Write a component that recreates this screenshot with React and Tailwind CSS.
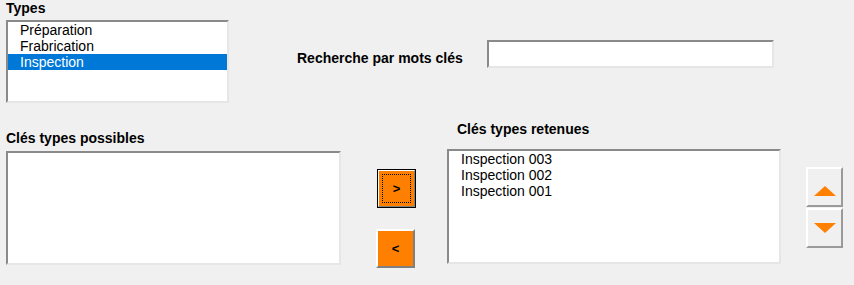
import { useState } from 'react';

const sunken = 'bg-white border-2 border-t-[#8a8a8a] border-l-[#8a8a8a] border-r-[#e6e6e6] border-b-[#e6e6e6]';

const ListBox = ({ items, selected, onSelect, className }) => (
  <div className={`${sunken} ${className}`}>
    {items.map((item) => (
      <div
        key={item}
        onClick={() => onSelect && onSelect(item)}
        className={`h-[16px] leading-[16px] pl-[12px] text-[14px] whitespace-nowrap ${
          selected === item ? 'bg-[#0078d7] text-white' : 'text-black'
        }`}
      >
        {item}
      </div>
    ))}
  </div>
);

const Triangle = ({ down }) => (
  <svg width="22" height="10" viewBox="0 0 22 10">
    <polygon points={down ? '0,0 22,0 11,10' : '11,0 22,10 0,10'} fill="#ff8000" />
  </svg>
);

export default function App() {
  const [type, setType] = useState('Inspection');
  const [search, setSearch] = useState('');

  return (
    <div className="w-[854px] h-[285px] bg-[#f0f0f0] overflow-hidden text-black font-['Liberation_Sans',Arial,sans-serif]">
      {/* Haut : types + recherche */}
      <div className="flex h-[121px]">
        <div className="ml-[6px] w-[223px]">
          <div className="h-[20px] leading-[16px] text-[14px] font-bold">Types</div>
          <ListBox
            items={['Préparation', 'Frabrication', 'Inspection']}
            selected={type}
            onSelect={setType}
            className="h-[83px]"
          />
        </div>
        <div className="ml-[68px] w-[190px] mt-[50px] leading-[16px] text-[14px] font-bold whitespace-nowrap">
          Recherche par mots clés
        </div>
        <input
          value={search}
          onChange={(e) => setSearch(e.target.value)}
          className={`${sunken} mt-[40px] w-[287px] h-[28px] outline-none px-1 text-[14px]`}
        />
      </div>

      {/* Bas : clés possibles / retenues */}
      <div className="flex items-start">
        <div className="ml-[6px] w-[335px]">
          <div className="mt-[9px] h-[21px] leading-[16px] text-[14px] font-bold">Clés types possibles</div>
          <ListBox items={[]} className="h-[114px]" />
        </div>

        <div className="ml-[35px] w-[40px] flex flex-col">
          <button className="mt-[48px] ml-[1px] w-[39px] h-[39px] border border-black p-0">
            <div className="w-full h-full bg-[#ff8000] border border-t-white border-l-white border-r-[#808080] border-b-[#808080] p-[3px]">
              <div className="w-full h-full border border-dotted border-black flex items-center justify-center text-[13px] font-bold">
                &gt;
              </div>
            </div>
          </button>
          <button className="mt-[21px] w-[39px] h-[39px] bg-[#ff8000] border-2 border-t-white border-l-white border-r-[#808080] border-b-[#808080] flex items-center justify-center text-[13px] font-bold">
            &lt;
          </button>
        </div>

        <div className="ml-[31px] w-[334px]">
          <div className="h-[28px] leading-[16px] text-[14px] font-bold pl-[10px]">Clés types retenues</div>
          <ListBox items={['Inspection 003', 'Inspection 002', 'Inspection 001']} className="h-[115px]" />
        </div>

        <div className="ml-[25px] mt-[46px] flex flex-col">
          <button className="w-[37px] h-[40px] bg-[#f0f0f0] border-2 border-t-white border-l-white border-r-[#9a9a9a] border-b-[#9a9a9a] flex items-center justify-center pt-[8px]">
            <Triangle />
          </button>
          <button className="mt-[1px] w-[37px] h-[40px] bg-[#f0f0f0] border-2 border-t-white border-l-white border-r-[#9a9a9a] border-b-[#9a9a9a] flex items-center justify-center">
            <Triangle down />
          </button>
        </div>
      </div>
    </div>
  );
}
